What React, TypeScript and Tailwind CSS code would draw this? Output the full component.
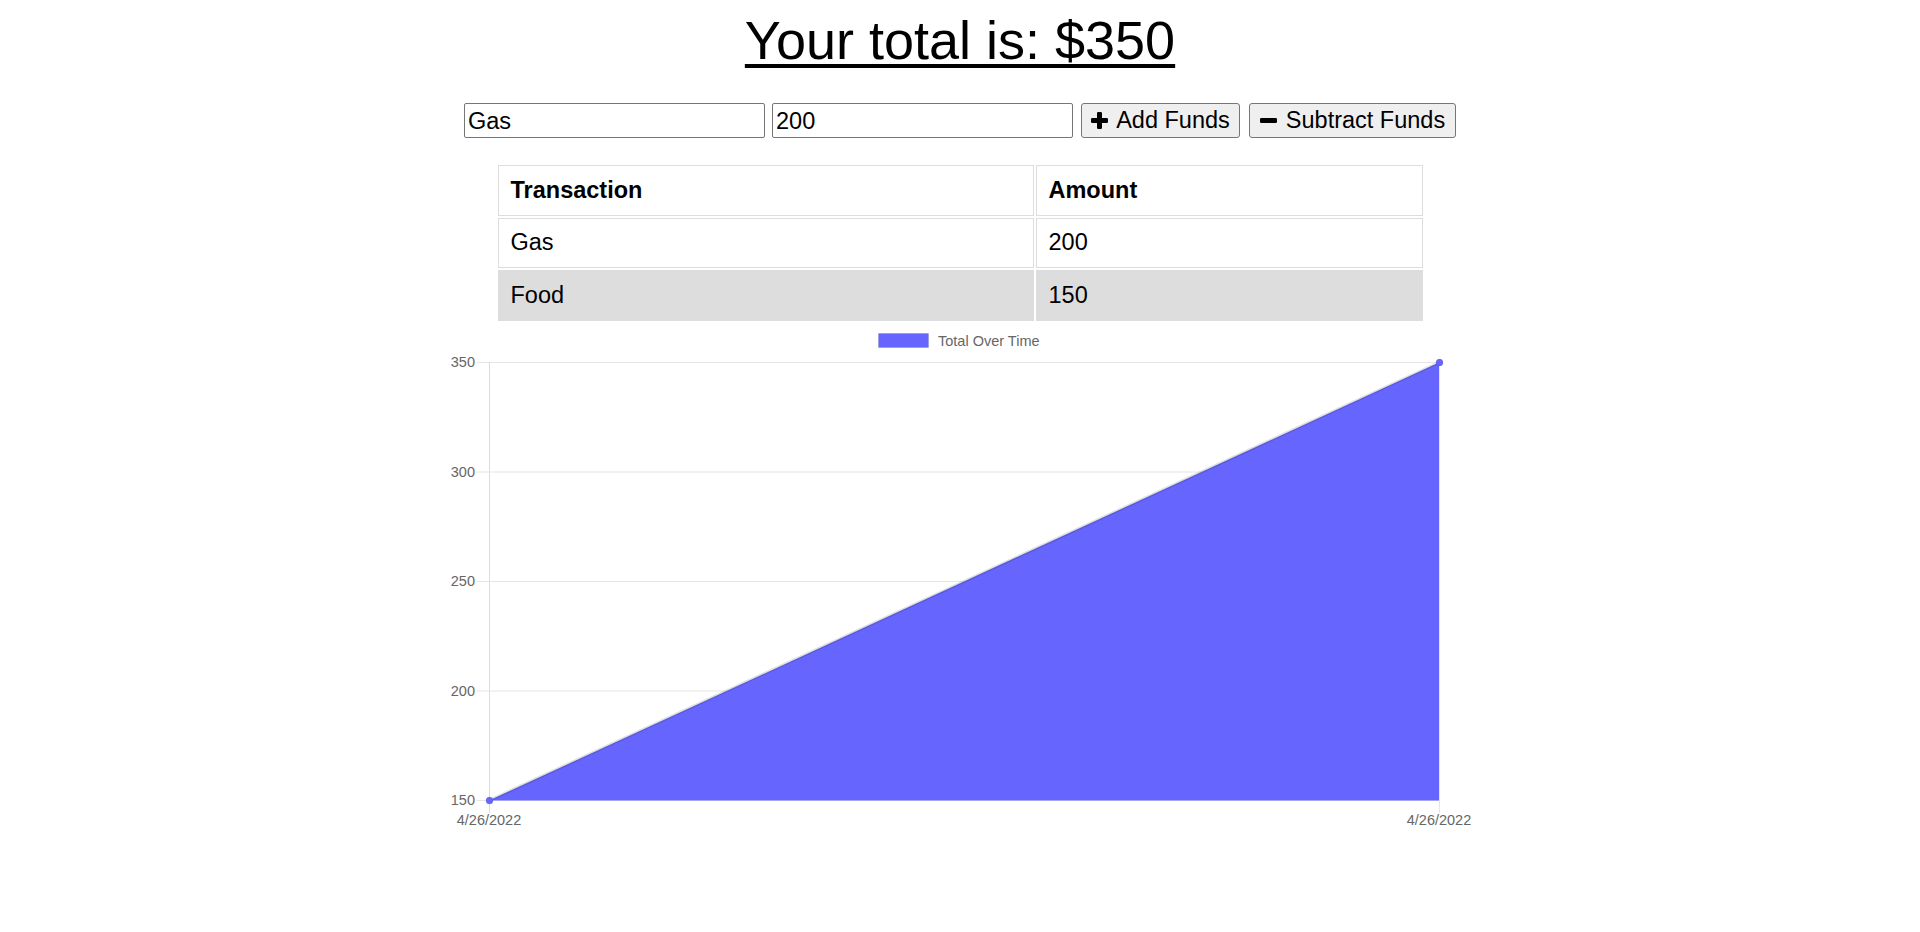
import React from "react";

function PlusIcon() {
  return (
    <svg width="17" height="17" viewBox="0 0 17 17" className="shrink-0">
      <rect x="6" y="0" width="5" height="17" rx="1.2" fill="#000" />
      <rect x="0" y="6" width="17" height="5" rx="1.2" fill="#000" />
    </svg>
  );
}

function MinusIcon() {
  return (
    <svg width="17" height="17" viewBox="0 0 17 17" className="shrink-0">
      <rect x="0" y="6" width="17" height="5" rx="1.2" fill="#000" />
    </svg>
  );
}

function Chart() {
  const grid = [
    { y: 36, v: "350" },
    { y: 145.5, v: "300" },
    { y: 255, v: "250" },
    { y: 364.5, v: "200" },
    { y: 474, v: "150" },
  ];
  return (
    <svg width="1040" height="515" viewBox="0 0 1040 515" className="block mx-auto">
      <g fontFamily="'Liberation Sans', Arial, sans-serif" fontSize="14.5" fill="#666">
        {/* legend */}
        <rect x="438.5" y="7.5" width="50" height="14" fill="#6666ff" stroke="rgba(0,0,0,0.1)" strokeWidth="1" />
        <text x="498" y="19.5">Total Over Time</text>
        {/* grid lines */}
        {grid.map((g) => (
          <line key={g.v} x1="37" x2="999" y1={g.y + 0.5} y2={g.y + 0.5} stroke="#e5e5e5" strokeWidth="1" />
        ))}
        <line x1="49.5" x2="49.5" y1="36" y2="487" stroke="#dcdcdc" strokeWidth="1" />
        <line x1="999.5" x2="999.5" y1="36" y2="487" stroke="#e5e5e5" strokeWidth="1" />
        {grid.map((g) => (
          <text key={"l" + g.v} x="35" y={g.y + 5} textAnchor="end">
            {g.v}
          </text>
        ))}
        <text x="49" y="499" textAnchor="middle">4/26/2022</text>
        <text x="999" y="499" textAnchor="middle">4/26/2022</text>
        {/* area */}
        <polygon points="49,474.5 999,36.5 999,474.5" fill="#6666ff" />
        <line x1="49" y1="474.5" x2="999" y2="36.5" stroke="rgba(0,0,0,0.12)" strokeWidth="3" />
        <circle cx="49.5" cy="474.5" r="3.5" fill="#6666ff" stroke="rgba(0,0,0,0.1)" strokeWidth="1" />
        <circle cx="999.5" cy="36.5" r="3.5" fill="#6666ff" stroke="rgba(0,0,0,0.1)" strokeWidth="1" />
      </g>
    </svg>
  );
}

export default function App() {
  const rows = [
    { name: "Gas", amount: "200", bg: "bg-white" },
    { name: "Food", amount: "150", bg: "bg-[#dddddd]" },
  ];
  return (
    <div className="min-h-screen bg-white text-black font-['Liberation_Sans',Arial,Helvetica,sans-serif]">
      <h1 className="pt-[10px] text-center text-[54px] leading-[61px] font-normal underline decoration-[4px] underline-offset-[5px]">
        Your total is: $350
      </h1>

      <div className="mt-[32px] flex justify-center items-center">
        <input
          type="text"
          defaultValue="Gas"
          className="w-[301px] h-[35px] border border-[#767676] rounded-[2px] pl-[3px] pt-[2px] text-[23.5px] text-black bg-white outline-none"
        />
        <input
          type="text"
          defaultValue="200"
          className="ml-[7px] w-[301px] h-[35px] border border-[#767676] rounded-[2px] pl-[3px] pt-[2px] text-[23.5px] text-black bg-white outline-none"
        />
        <button className="ml-[8px] w-[159px] h-[35px] border border-[#767676] rounded-[3px] bg-[#efefef] flex items-center justify-center gap-[8px] text-[23.5px] text-black">
          <PlusIcon />
          <span>Add Funds</span>
        </button>
        <button className="ml-[9px] w-[207px] h-[35px] border border-[#767676] rounded-[3px] bg-[#efefef] flex items-center justify-center gap-[9px] text-[23.5px] text-black">
          <MinusIcon />
          <span>Subtract Funds</span>
        </button>
      </div>

      <table className="mt-[25px] mx-auto w-[929px] border-separate border-spacing-[2px] text-[23.5px]">
        <thead>
          <tr>
            <th className="w-[536px] h-[50.5px] border border-[#dddddd] pl-3 text-left font-bold">Transaction</th>
            <th className="h-[50.5px] border border-[#dddddd] pl-3 text-left font-bold">Amount</th>
          </tr>
        </thead>
        <tbody>
          {rows.map((r) => (
            <tr key={r.name}>
              <td className={`h-[50.5px] border border-[#dddddd] pl-3 ${r.bg}`}>{r.name}</td>
              <td className={`h-[50.5px] border border-[#dddddd] pl-3 ${r.bg}`}>{r.amount}</td>
            </tr>
          ))}
        </tbody>
      </table>

      <div className="mt-[3px]">
        <Chart />
      </div>
    </div>
  );
}
